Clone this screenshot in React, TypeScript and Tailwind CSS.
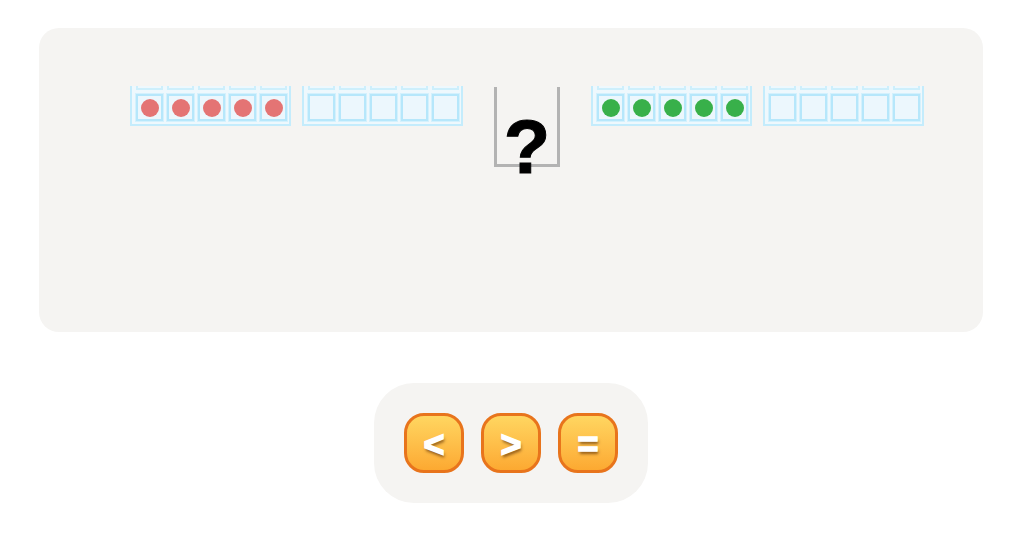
import React from "react";

type FrameProps = { filled: number; color?: string };

const dotColor: Record<string, string> = {
    red: "bg-[#e47474]",
    green: "bg-[#38b04a]",
};

const TenFrame = ({ filled, color = "red" }: FrameProps) => {
    return (
        <div className="flex border-x-2 border-b-2 border-[#c4ecfc] bg-[#eef8fd] pl-[2px]">
            {[0, 1, 2, 3, 4].map((i) => (
                <div key={i} className="w-[31px] flex flex-col items-center">
                    {/* clipped top row */}
                    <div className="w-[27px] h-[4px] border-x-2 border-b-2 border-[#cdeffc]" />
                    <div className="mt-[4px] mb-[3px] w-[27px] h-[27px] border-2 border-[#b6e7fb] bg-[#ecf7fd] ring-1 ring-[#d4f1fd] flex items-center justify-center">
                        {i < filled && <div className={`w-[18px] h-[18px] rounded-full ${dotColor[color]}`} />}
                    </div>
                </div>
            ))}
        </div>
    );
};

const buttons = ["<", ">", "="];

export default function App() {
    return (
        <div className="w-[1022px] h-[533px] bg-white font-['Liberation_Sans',Arial,sans-serif] overflow-hidden">
            <div className="mx-[39px] mt-[28px] h-[304px] rounded-[20px] bg-[#f5f4f2] pt-[58px] pl-[91px]">
                <div className="flex items-start">
                    <div className="flex gap-[11px]">
                        <TenFrame filled={5} color="red" />
                        <TenFrame filled={0} />
                    </div>
                    <div className="ml-[31px] mt-[1px] w-[66px] h-[80px] border-x-[3px] border-b-[3px] border-[#b3b3b3] flex justify-center items-start">
                        <span className="mt-[21px] text-[76px] leading-[78px] font-bold text-black [-webkit-text-stroke:1px_black]">?</span>
                    </div>
                    <div className="ml-[31px] flex gap-[11px]">
                        <TenFrame filled={5} color="green" />
                        <TenFrame filled={0} />
                    </div>
                </div>
            </div>
            <div className="mx-auto mt-[51px] w-[274px] h-[120px] rounded-[40px] bg-[#f5f4f2] flex items-center justify-center gap-[17px]">
                {buttons.map((b) => (
                    <button
                        key={b}
                        className="w-[60px] h-[60px] rounded-[20px] border-[3px] border-[#e8741c] bg-linear-to-b from-[#ffd660] to-[#fca931] text-white font-bold text-[36px] leading-none pt-[4px] flex items-center justify-center [-webkit-text-stroke:1.5px_white] [text-shadow:1px_3px_3px_rgba(80,35,0,0.6)]"
                    >
                        {b}
                    </button>
                ))}
            </div>
        </div>
    );
}
